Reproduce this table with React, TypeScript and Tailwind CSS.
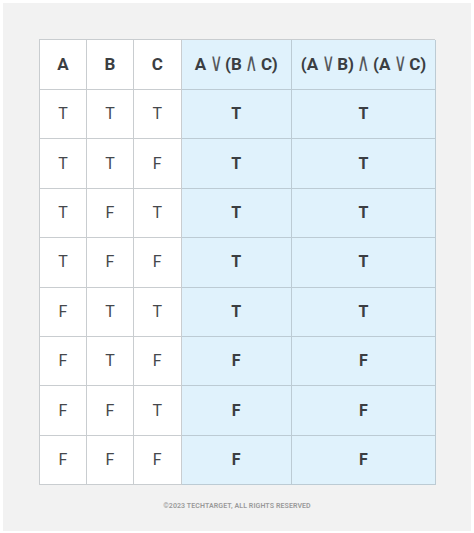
import React from "react";

const rows: string[][] = [
  ["T", "T", "T", "T", "T"],
  ["T", "T", "F", "T", "T"],
  ["T", "F", "T", "T", "T"],
  ["T", "F", "F", "T", "T"],
  ["F", "T", "T", "T", "T"],
  ["F", "T", "F", "F", "F"],
  ["F", "F", "T", "F", "F"],
  ["F", "F", "F", "F", "F"],
];

// operator glyphs are drawn thin and tall in the original
const Op = ({ c }: { c: string }) => (
  <span
    className="inline-block font-extralight text-[17px] mx-[3.5px] scale-y-[1.45] -translate-y-[1px] text-[#55585c]"
    style={{ fontFamily: "'DejaVu Sans ExtraLight', 'DejaVu Sans', sans-serif" }}
  >
    {c}
  </span>
);

const headers: React.ReactNode[] = [
  "A",
  "B",
  "C",
  <>A<Op c="∨" />(B<Op c="∧" />C)</>,
  <>(A<Op c="∨" />B)<Op c="∧" />(A<Op c="∨" />C)</>,
];

export default function App() {
  return (
    <div className="w-[474px] h-[533px] bg-white p-[3px]" style={{ fontFamily: "Roboto, 'Noto Sans', sans-serif" }}>
      <div className="h-[528px] bg-[#f2f2f2] pt-[36px] pl-[36px]">
        <div className="grid grid-cols-[47px_47px_47.5px_110.5px_144px] w-[396px] border-l border-t border-[#c9cdd0] text-[#3b3e42]">
          {headers.map((h, i) => (
            <div
              key={i}
              className={`h-[50px] flex items-center justify-center font-bold text-[17px] whitespace-nowrap border-r border-b ${
                i >= 3 ? "bg-[#e0f2fc] border-[#bccbd4]" : "bg-white border-[#c9cdd0]"
              }`}
            >
              {h}
            </div>
          ))}
          {rows.map((r, ri) =>
            r.map((v, ci) => (
              <div
                key={`${ri}-${ci}`}
                className={`h-[49.4px] flex items-center justify-center text-[16px] border-r border-b ${
                  ci >= 3
                    ? "bg-[#e0f2fc] border-[#bccbd4] font-bold"
                    : "bg-white border-[#c9cdd0] text-[#45484c]"
                }`}
              >
                {v}
              </div>
            ))
          )}
        </div>
        <div className="mt-[16px] pr-[36px] text-center text-[7px] font-semibold text-[#9a9a9a] tracking-[0.1px]">
          ©2023 TECHTARGET, ALL RIGHTS RESERVED
        </div>
      </div>
    </div>
  );
}
